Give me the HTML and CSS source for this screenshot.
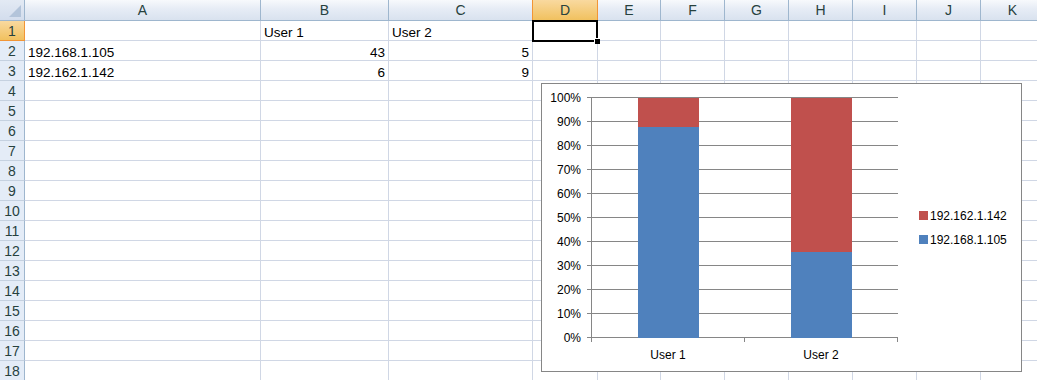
FILE: index.html
```html
<!DOCTYPE html>
<html>
<head>
<meta charset="utf-8">
<link rel="stylesheet" href="styles.css">
</head>
<body>
<div class="sheet">
  <div class="corner"><span class="tri"></span></div>
  <div class="ch">A</div><div class="ch">B</div><div class="ch">C</div><div class="ch sel">D</div><div class="ch">E</div><div class="ch">F</div><div class="ch">G</div><div class="ch">H</div><div class="ch">I</div><div class="ch">J</div><div class="ch">K</div>

  <div class="rh sel">1</div><div class="c"></div><div class="c">User 1</div><div class="c">User 2</div><div class="c active"><span class="handle"></span></div><div class="c"></div><div class="c"></div><div class="c"></div><div class="c"></div><div class="c"></div><div class="c"></div><div class="c"></div>

  <div class="rh">2</div><div class="c">192.168.1.105</div><div class="c num">43</div><div class="c num">5</div><div class="c"></div><div class="c"></div><div class="c"></div><div class="c"></div><div class="c"></div><div class="c"></div><div class="c"></div><div class="c"></div>

  <div class="rh">3</div><div class="c">192.162.1.142</div><div class="c num">6</div><div class="c num">9</div><div class="c"></div><div class="c"></div><div class="c"></div><div class="c"></div><div class="c"></div><div class="c"></div><div class="c"></div><div class="c"></div>

  <div class="rh">4</div><div class="c"></div><div class="c"></div><div class="c"></div><div class="c"></div><div class="c"></div><div class="c"></div><div class="c"></div><div class="c"></div><div class="c"></div><div class="c"></div><div class="c"></div>
  <div class="rh">5</div><div class="c"></div><div class="c"></div><div class="c"></div><div class="c"></div><div class="c"></div><div class="c"></div><div class="c"></div><div class="c"></div><div class="c"></div><div class="c"></div><div class="c"></div>
  <div class="rh">6</div><div class="c"></div><div class="c"></div><div class="c"></div><div class="c"></div><div class="c"></div><div class="c"></div><div class="c"></div><div class="c"></div><div class="c"></div><div class="c"></div><div class="c"></div>
  <div class="rh">7</div><div class="c"></div><div class="c"></div><div class="c"></div><div class="c"></div><div class="c"></div><div class="c"></div><div class="c"></div><div class="c"></div><div class="c"></div><div class="c"></div><div class="c"></div>
  <div class="rh">8</div><div class="c"></div><div class="c"></div><div class="c"></div><div class="c"></div><div class="c"></div><div class="c"></div><div class="c"></div><div class="c"></div><div class="c"></div><div class="c"></div><div class="c"></div>
  <div class="rh">9</div><div class="c"></div><div class="c"></div><div class="c"></div><div class="c"></div><div class="c"></div><div class="c"></div><div class="c"></div><div class="c"></div><div class="c"></div><div class="c"></div><div class="c"></div>
  <div class="rh">10</div><div class="c"></div><div class="c"></div><div class="c"></div><div class="c"></div><div class="c"></div><div class="c"></div><div class="c"></div><div class="c"></div><div class="c"></div><div class="c"></div><div class="c"></div>
  <div class="rh">11</div><div class="c"></div><div class="c"></div><div class="c"></div><div class="c"></div><div class="c"></div><div class="c"></div><div class="c"></div><div class="c"></div><div class="c"></div><div class="c"></div><div class="c"></div>
  <div class="rh">12</div><div class="c"></div><div class="c"></div><div class="c"></div><div class="c"></div><div class="c"></div><div class="c"></div><div class="c"></div><div class="c"></div><div class="c"></div><div class="c"></div><div class="c"></div>
  <div class="rh">13</div><div class="c"></div><div class="c"></div><div class="c"></div><div class="c"></div><div class="c"></div><div class="c"></div><div class="c"></div><div class="c"></div><div class="c"></div><div class="c"></div><div class="c"></div>
  <div class="rh">14</div><div class="c"></div><div class="c"></div><div class="c"></div><div class="c"></div><div class="c"></div><div class="c"></div><div class="c"></div><div class="c"></div><div class="c"></div><div class="c"></div><div class="c"></div>
  <div class="rh">15</div><div class="c"></div><div class="c"></div><div class="c"></div><div class="c"></div><div class="c"></div><div class="c"></div><div class="c"></div><div class="c"></div><div class="c"></div><div class="c"></div><div class="c"></div>
  <div class="rh">16</div><div class="c"></div><div class="c"></div><div class="c"></div><div class="c"></div><div class="c"></div><div class="c"></div><div class="c"></div><div class="c"></div><div class="c"></div><div class="c"></div><div class="c"></div>
  <div class="rh">17</div><div class="c"></div><div class="c"></div><div class="c"></div><div class="c"></div><div class="c"></div><div class="c"></div><div class="c"></div><div class="c"></div><div class="c"></div><div class="c"></div><div class="c"></div>
  <div class="rh">18</div><div class="c"></div><div class="c"></div><div class="c"></div><div class="c"></div><div class="c"></div><div class="c"></div><div class="c"></div><div class="c"></div><div class="c"></div><div class="c"></div><div class="c"></div>
</div>

<div class="chart">
  <svg class="chart-svg" width="481" height="289" viewBox="541 83 481 289" xmlns="http://www.w3.org/2000/svg">
    <g stroke="#868686" stroke-width="1" shape-rendering="crispEdges">
      <line x1="587" y1="97.5" x2="898" y2="97.5"/>
      <line x1="587" y1="121.5" x2="898" y2="121.5"/>
      <line x1="587" y1="145.5" x2="898" y2="145.5"/>
      <line x1="587" y1="169.5" x2="898" y2="169.5"/>
      <line x1="587" y1="193.5" x2="898" y2="193.5"/>
      <line x1="587" y1="217.5" x2="898" y2="217.5"/>
      <line x1="587" y1="241.5" x2="898" y2="241.5"/>
      <line x1="587" y1="265.5" x2="898" y2="265.5"/>
      <line x1="587" y1="289.5" x2="898" y2="289.5"/>
      <line x1="587" y1="313.5" x2="898" y2="313.5"/>
      <line x1="587" y1="337.5" x2="898" y2="337.5"/>
      <line x1="591.5" y1="97" x2="591.5" y2="342"/>
      <line x1="744.5" y1="337" x2="744.5" y2="342"/>
      <line x1="897.5" y1="337" x2="897.5" y2="342"/>
    </g>
    <g shape-rendering="crispEdges">
      <rect x="638" y="127" width="61" height="210.5" fill="#4f81bd"/>
      <rect x="638" y="97.5" width="61" height="29.5" fill="#c0504d"/>
      <rect x="791" y="251.5" width="61" height="86" fill="#4f81bd"/>
      <rect x="791" y="97.5" width="61" height="154" fill="#c0504d"/>
      <rect x="919" y="211" width="9" height="9" fill="#c0504d"/>
      <rect x="919" y="235" width="9" height="9" fill="#4f81bd"/>
    </g>
    <g class="ylab" text-anchor="end">
      <text x="581" y="102">100%</text>
      <text x="581" y="126">90%</text>
      <text x="581" y="150">80%</text>
      <text x="581" y="174">70%</text>
      <text x="581" y="198">60%</text>
      <text x="581" y="222">50%</text>
      <text x="581" y="246">40%</text>
      <text x="581" y="270">30%</text>
      <text x="581" y="294">20%</text>
      <text x="581" y="318">10%</text>
      <text x="581" y="342">0%</text>
    </g>
    <g class="xlab" text-anchor="middle">
      <text x="668" y="359">User 1</text>
      <text x="821" y="359">User 2</text>
    </g>
    <g class="leg">
      <text x="930" y="219.5">192.162.1.142</text>
      <text x="930" y="243.5">192.168.1.105</text>
    </g>
  </svg>
</div>
</body>
</html>
```
FILE: styles.css
```css
html, body {
  margin: 0;
  padding: 0;
  background: #ffffff;
  overflow: hidden;
}
body {
  width: 1037px;
  height: 380px;
  position: relative;
  font-family: "Liberation Sans", Arial, sans-serif;
  font-size: 13px;
  color: #000;
}
.sheet {
  display: grid;
  grid-template-columns: 25px 236px 128px 144px 65px 63px 64px 64px 64px 64px 64px 64px;
  grid-template-rows: 21px;
  grid-auto-rows: 20px;
  width: 1037px;
  height: 380px;
  overflow: hidden;
}
.corner {
  box-sizing: border-box;
  background: linear-gradient(#e3eaf4, #d3dded);
  border-right: 1px solid #9eb6ce;
  border-bottom: 1px solid #9eb6ce;
  position: relative;
}
.corner .tri {
  position: absolute;
  right: 3px;
  bottom: 3px;
  width: 0;
  height: 0;
  border-left: 12px solid transparent;
  border-bottom: 12px solid #b3c4da;
}
.ch {
  box-sizing: border-box;
  background: linear-gradient(#f7f9fc 0%, #e6ecf5 45%, #d9e2ef 100%);
  border-right: 1px solid #9eb6ce;
  border-bottom: 1px solid #9eb6ce;
  text-align: center;
  line-height: 21px;
  color: #27413e;
  font-size: 14px;
}
.ch.sel {
  background: linear-gradient(#f9d99f 0%, #f1c15f 100%);
  border-right: 1px solid #f29536;
  border-left: 1px solid #f29536;
  border-bottom: 1px solid #f29536;
  margin-left: -1px;
}
.rh {
  box-sizing: border-box;
  background: #e4ecf7;
  border-right: 1px solid #9eb6ce;
  border-bottom: 1px solid #c5d1e0;
  text-align: center;
  line-height: 21px;
  color: #27413e;
  font-size: 14px;
}
.rh.sel {
  background: linear-gradient(#f9d99f 0%, #f1c15f 100%);
  border-right: 1px solid #f29536;
  border-bottom: 1px solid #f29536;
}
.c {
  box-sizing: border-box;
  border-right: 1px solid #d0d7e5;
  border-bottom: 1px solid #d0d7e5;
  line-height: 20px;
  padding: 2px 3px 0;
  white-space: nowrap;
  overflow: hidden;
  font-size: 13.5px;
}
.c.num {
  text-align: right;
}
.c.active {
  position: relative;
  overflow: visible;
}
.c.active::before {
  content: "";
  position: absolute;
  left: -1px;
  top: -1px;
  right: -1px;
  bottom: -2px;
  border: 2px solid #000;
}
.c.active .handle {
  position: absolute;
  right: -3px;
  bottom: -4px;
  width: 5px;
  height: 5px;
  background: #000;
  border: 1px solid #fff;
  border-right: none;
  border-bottom: none;
}
.chart {
  position: absolute;
  left: 541px;
  top: 83px;
  width: 481px;
  height: 289px;
  box-sizing: border-box;
  border: 1px solid #868686;
  background: #fff;
}
.chart-svg {
  position: absolute;
  left: -1px;
  top: -1px;
  display: block;
}
.ylab text,
.xlab text,
.leg text {
  font-family: "Liberation Sans", Arial, sans-serif;
  font-size: 12px;
  fill: #000;
}
```
